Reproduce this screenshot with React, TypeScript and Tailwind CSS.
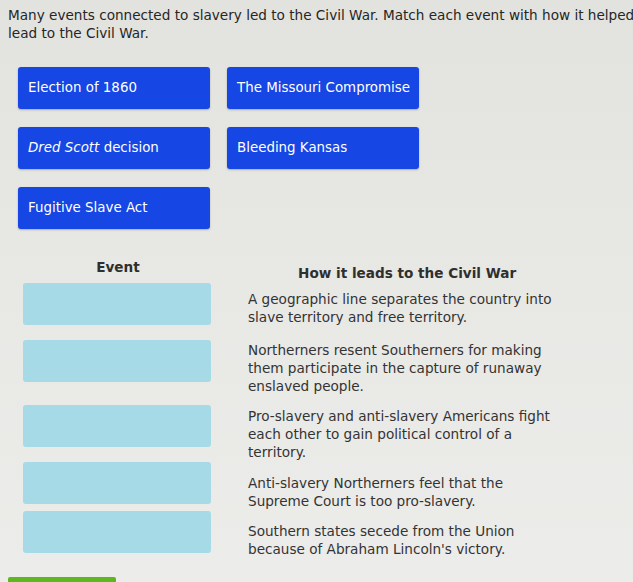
import React from "react";

const font = { fontFamily: '"DejaVu Sans", Verdana, sans-serif' };

function Btn({ children }: { children: React.ReactNode }) {
  return (
    <div className="h-[42px] w-[192px] rounded-[3px] bg-[#1646e4] text-white text-[13.4px] flex items-center pl-[10px] shadow-[0_1px_2px_rgba(0,0,0,0.25)]">
      {children}
    </div>
  );
}

const rows: { h: string; textMt: string; lines: string[] }[] = [
  { h: "h-[57px]", textMt: "mt-[7px]", lines: ["A geographic line separates the country into", "slave territory and free territory."] },
  { h: "h-[65px]", textMt: "mt-[1px]", lines: ["Northerners resent Southerners for making", "them participate in the capture of runaway", "enslaved people."] },
  { h: "h-[57px]", textMt: "mt-[2px]", lines: ["Pro-slavery and anti-slavery Americans fight", "each other to gain political control of a", "territory."] },
  { h: "h-[49px]", textMt: "mt-[12px]", lines: ["Anti-slavery Northerners feel that the", "Supreme Court is too pro-slavery."] },
  { h: "h-[46px]", textMt: "mt-[11px]", lines: ["Southern states secede from the Union", "because of Abraham Lincoln's victory."] },
];

export default function App() {
  return (
    <div
      style={font}
      className="relative w-[633px] h-[582px] overflow-hidden bg-gradient-to-b from-[#e2e2de] via-[#e8e8e5] to-[#ececea] text-[#2f2f2f]"
    >
      <div className="pl-[8px] pt-[6px] text-[13.6px] leading-[18px] whitespace-nowrap text-[#262626]">
        <div>Many events connected to slavery led to the Civil War. Match each event with how it helped</div>
        <div>lead to the Civil War.</div>
      </div>

      <div className="mt-[25px] pl-[18px] grid grid-cols-[192px_192px] gap-x-[17px] gap-y-[18px]">
        <Btn>Election of 1860</Btn>
        <Btn>The Missouri Compromise</Btn>
        <Btn>
          <span className="italic">Dred Scott</span>&nbsp;decision
        </Btn>
        <Btn>Bleeding Kansas</Btn>
        <Btn>Fugitive Slave Act</Btn>
      </div>

      <div className="mt-[29px] h-[25px] flex text-[13.6px] leading-[18px] font-bold">
        <div className="w-[230px] text-center pl-[6px]">Event</div>
        <div className="pl-[68px] mt-[6px]">How it leads to the Civil War</div>
      </div>

      <div className="flex flex-col">
        {rows.map((r, i) => (
          <div key={i} className={`flex items-start ${r.h}`}>
            <div className="ml-[23px] w-[188px] h-[42px] rounded-[3px] bg-[#a6dae6] shrink-0" />
            <div className={`ml-[37px] text-[13.6px] leading-[18px] text-[#333] ${r.textMt}`}>
              {r.lines.map((l, j) => (
                <div key={j}>{l}</div>
              ))}
            </div>
          </div>
        ))}
      </div>

      <div className="absolute left-[8px] bottom-0 w-[108px] h-[5px] rounded-t-[2px] bg-[#5cb81e]" />
    </div>
  );
}
